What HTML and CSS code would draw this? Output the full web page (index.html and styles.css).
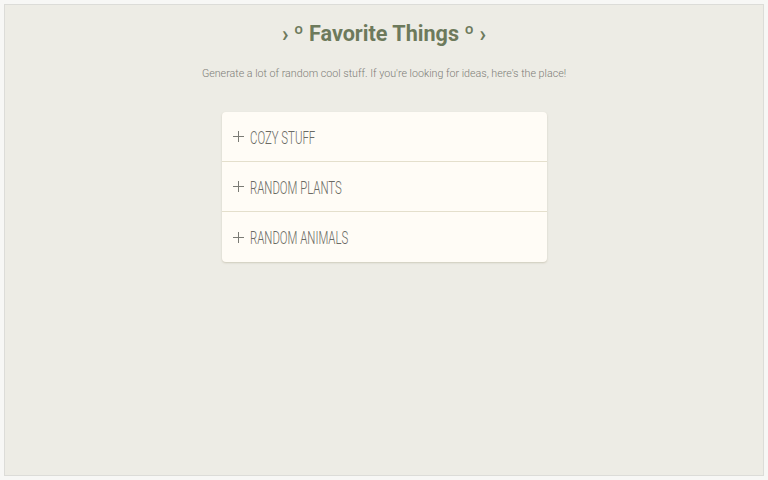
FILE: index.html
```html
<!DOCTYPE html>
<html lang="en">
<head>
    <meta charset="UTF-8">
    <meta name="viewport" content="width=device-width, initial-scale=1.0">
    <title>Favorite Things</title>
    <link rel="stylesheet" href="styles.css">
</head>
<body>
    <div class="page">
        <h1>› º Favorite Things º ›</h1>
        <p class="intro">Generate a lot of random cool stuff. If you're looking for ideas, here's the place!</p>

        <div class="accordion">
            <div class="item"><span class="plus"></span><span class="label">COZY STUFF</span></div>
            <div class="item"><span class="plus"></span><span class="label">RANDOM PLANTS</span></div>
            <div class="item"><span class="plus"></span><span class="label">RANDOM ANIMALS</span></div>
        </div>
    </div>
</body>
</html>
```

FILE: styles.css
```css
* {
    margin: 0;
    padding: 0;
    box-sizing: border-box;
}
body {
    background-color: #f7f7f5;
    padding: 4px;
    font-family: Roboto, "Liberation Sans", sans-serif;
}
.page {
    height: 472px;
    background-color: #edece5;
    border: 1px solid #dcdcd8;
    display: flex;
    flex-direction: column;
    align-items: center;
}
h1 {
    margin-top: 16px;
    font-size: 21.6px;
    font-weight: bold;
    color: #6d7a5c;
}
.intro {
    margin-top: 21px;
    font-size: 10.7px;
    font-weight: 300;
    color: #7d7d78;
}
.accordion {
    margin-top: 32px;
    width: 325px;
    background-color: #fffcf6;
    border-radius: 4px;
    box-shadow: 0 1px 2px rgba(150, 140, 110, 0.35);
}
.item {
    display: flex;
    align-items: center;
    height: 50px;
    padding-left: 11px;
    color: #6a6a64;
    border-bottom: 1px solid #e4dfcc;
}
.item:last-child {
    border-bottom: none;
}
.label {
    display: inline-block;
    font-size: 17.5px;
    font-weight: 300;
    transform: scaleX(0.65);
    transform-origin: left center;
    margin-top: 2px;
}
.plus {
    position: relative;
    width: 11px;
    height: 11px;
    margin-right: 6px;
}
.plus::before,
.plus::after {
    content: "";
    position: absolute;
    background-color: #7a7a74;
}
.plus::before {
    left: 0;
    top: 5px;
    width: 11px;
    height: 1px;
}
.plus::after {
    left: 5px;
    top: 0;
    width: 1px;
    height: 11px;
}
```
